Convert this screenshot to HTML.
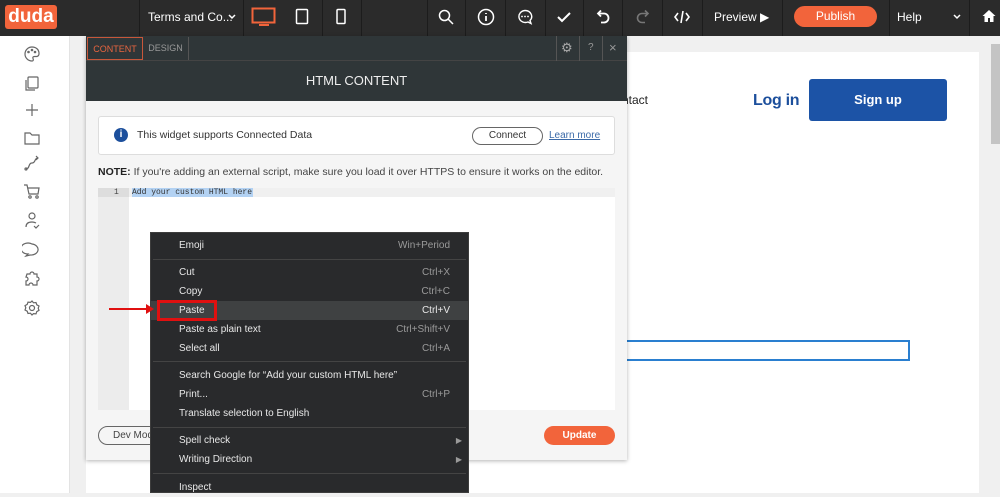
<!DOCTYPE html>
<html><head><style>
*{margin:0;padding:0;box-sizing:border-box}
body{width:1000px;height:493px;overflow:hidden;background:#f0f0f0;font-family:"Liberation Sans",sans-serif;position:relative}
.a{position:absolute}
.top{left:0;top:0;width:1000px;height:36px;background:#2b2b2b}
.dv{position:absolute;top:0;width:1px;height:36px;background:#1c1c1c}
.tw{color:#fff;font-size:13px}
.side{left:0;top:36px;width:70px;height:457px;background:#fff;border-right:1px solid #e3e3e3}
.menu{left:150px;top:232px;width:319px;height:261px;background:#292a2c;border:1px solid #3d3d3d;color:#e8e8e8;font-size:10px}
.mi{position:absolute;left:28px;right:18px;height:19px;line-height:19px}
.mi span{float:right;color:#9a9a9a}
.sep{position:absolute;left:2px;right:2px;height:1px;background:#444}
</style></head><body>
<div class="a top">
 <div class="a" style="left:5px;top:5px;width:52px;height:24px;background:#f2643b;border-radius:3px;color:#fff;font-size:19px;font-weight:bold;text-align:center;line-height:24px">duda</div>
 <div class="dv" style="left:139px"></div><div class="dv" style="left:243px"></div><div class="dv" style="left:322px"></div><div class="dv" style="left:361px"></div><div class="dv" style="left:427px"></div><div class="dv" style="left:465px"></div><div class="dv" style="left:505px"></div><div class="dv" style="left:545px"></div><div class="dv" style="left:583px"></div><div class="dv" style="left:622px"></div><div class="dv" style="left:662px"></div><div class="dv" style="left:702px"></div><div class="dv" style="left:782px"></div><div class="dv" style="left:889px"></div><div class="dv" style="left:969px"></div>
 <div class="a tw" style="left:148px;top:10px;font-size:12px">Terms and Co...</div>
 <svg class="a" style="left:228px;top:14px" width="8" height="6"><path d="M1 1l3 3 3-3" fill="none" stroke="#fff" stroke-width="1.5"/></svg>
 <svg class="a" style="left:251px;top:7px" width="26" height="20"><rect x="1.5" y="1.5" width="22" height="14" fill="none" stroke="#f2643b" stroke-width="2"/><rect x="8" y="17" width="10" height="2" fill="#f2643b"/></svg>
 <svg class="a" style="left:295px;top:8px" width="14" height="18"><rect x="1.5" y="1.5" width="11" height="14" rx="1" fill="none" stroke="#fff" stroke-width="1.5"/></svg>
 <svg class="a" style="left:336px;top:8px" width="10" height="18"><rect x="1" y="1.5" width="8" height="14" rx="1" fill="none" stroke="#fff" stroke-width="1.5"/></svg>
 <svg class="a" style="left:438px;top:9px" width="16" height="16"><circle cx="6.5" cy="6.5" r="5" fill="none" stroke="#fff" stroke-width="1.5"/><path d="M10 10l5 5" stroke="#fff" stroke-width="1.5"/></svg>
 <svg class="a" style="left:477px;top:8px" width="18" height="18"><circle cx="9" cy="9" r="7.5" fill="none" stroke="#fff" stroke-width="1.5"/><path d="M9 8v5M9 5v1" stroke="#fff" stroke-width="1.8"/></svg>
 <svg class="a" style="left:517px;top:9px" width="16" height="16"><path d="M8 1.5a6.5 6 0 1 0 3 11.5l3 1.5-1-3A6.5 6 0 0 0 8 1.5z" fill="none" stroke="#fff" stroke-width="1.4"/><circle cx="5" cy="7.5" r=".9" fill="#fff"/><circle cx="8" cy="7.5" r=".9" fill="#fff"/><circle cx="11" cy="7.5" r=".9" fill="#fff"/></svg>
 <svg class="a" style="left:557px;top:10px" width="14" height="14"><path d="M1 7l4 4 8-8" fill="none" stroke="#fff" stroke-width="2"/></svg>
 <svg class="a" style="left:595px;top:9px" width="16" height="16"><path d="M4 4.5h5a4.5 4.5 0 0 1 0 9H6" fill="none" stroke="#fff" stroke-width="1.8"/><path d="M6 1.5L3 4.5l3 3" fill="none" stroke="#fff" stroke-width="1.8"/></svg>
 <svg class="a" style="left:635px;top:9px" width="16" height="16"><path d="M12 4.5H7a4.5 4.5 0 0 0 0 9h3" fill="none" stroke="#777" stroke-width="1.6"/><path d="M10 1.5l3 3-3 3" fill="none" stroke="#777" stroke-width="1.6"/></svg>
 <svg class="a" style="left:674px;top:10px" width="16" height="14"><path d="M4 3L1 7l3 4M12 3l3 4-3 4M9 1L7 13" fill="none" stroke="#fff" stroke-width="1.6"/></svg>
 <div class="a tw" style="left:714px;top:10px;font-size:12px">Preview &#9654;</div>
 <div class="a" style="left:794px;top:6px;width:83px;height:21px;background:#f2643b;border-radius:11px;color:#fff;font-size:12px;text-align:center;line-height:21px">Publish</div>
 <div class="a tw" style="left:897px;top:10px;font-size:12px">Help</div>
 <svg class="a" style="left:953px;top:14px" width="8" height="6"><path d="M1 1l3 3 3-3" fill="none" stroke="#fff" stroke-width="1.5"/></svg>
 <svg class="a" style="left:982px;top:9px" width="14" height="14"><path d="M7 1L0.5 7H2.5v6h3.5v-4h2v4h3.5V7h2z" fill="#fff"/></svg>
</div>
<div class="a side"></div>
<svg class="a" style="left:22px;top:44px" width="20" height="280" fill="none" stroke="#666" stroke-width="1.2">
 <path d="M10 3a7 7 0 1 0 0 14c1.5 0 1.5-1.5 1-2.5s0-2 1.5-2H15a3 3 0 0 0 2-3C17 5.5 14 3 10 3z"/><circle cx="6.5" cy="8" r=".7"/><circle cx="10" cy="6" r=".7"/><circle cx="13" cy="8" r=".7"/>
 <rect x="6" y="33" width="10" height="11" rx="1"/><path d="M4 36v10h9"/>
 <path d="M10 60v12M4 66h12"/>
 <path d="M3 89h5l2 2h7v9H3z"/>
 <path d="M4 125c4 0 2-6 6-6s2-5 6-5"/><circle cx="4" cy="125" r="1"/><path d="M14 112l2 2-2 2"/>
 <path d="M2 141h3l2 9h9l1-6H6"/><circle cx="8" cy="153" r="1.2"/><circle cx="15" cy="153" r="1.2"/>
 <circle cx="10" cy="172" r="3"/><path d="M4 183c0-4 3-5 6-5 2 0 3 .5 4 1M12 182l2 2 3-3"/>
 <path d="M10 200a7 5.5 0 1 0-4 10l-2 2 4-1a7 5.5 0 1 0 2-11z"/>
 <path d="M5 230h3a2 2 0 1 1 4 0h3v3a2 2 0 1 1 0 4v4h-4a2 2 0 1 0-4 0H4v-4a2 2 0 1 0 0-4z"/>
 <circle cx="10" cy="264" r="2.5"/><path d="M10 257l1.5 1.8 2.5-.3.8 2.3 2.2 1.2-.8 2.2.8 2.2-2.2 1.2-.8 2.3-2.5-.3L10 271l-1.5-1.8-2.5.3-.8-2.3-2.2-1.2.8-2.2-.8-2.2 2.2-1.2.8-2.3 2.5.3z"/>
</svg>
<div class="a" style="left:86px;top:52px;width:893px;height:441px;background:#fff"></div>
<div class="a" style="left:991px;top:44px;width:9px;height:100px;background:#c4c4c4"></div>
<div class="a" style="left:622px;top:93px;font-size:12px;color:#222">ntact</div>
<div class="a" style="left:753px;top:92px;font-size:16px;color:#1c4f9c;font-weight:bold;letter-spacing:-0.3px">Log in</div>
<div class="a" style="left:809px;top:79px;width:138px;height:42px;background:#1c53a6;border-radius:3px;color:#fff;font-size:13px;font-weight:bold;text-align:center;line-height:42px">Sign up</div>
<div class="a" style="left:620px;top:340px;width:290px;height:21px;border:2px solid #2a7fd0"></div>
<!-- panel -->
<div class="a" style="left:86px;top:36px;width:541px;height:424px;background:#f5f5f5;box-shadow:0 1px 4px rgba(0,0,0,.3)">
 <div class="a" style="left:0;top:0;width:541px;height:25px;background:#2f3638;border-bottom:1px solid #444"></div>
 <div class="a" style="left:1px;top:1px;width:56px;height:23px;border:1px solid #c8573a;color:#e8653f;font-size:9px;text-align:center;line-height:22px">CONTENT</div>
 <div class="a" style="left:57px;top:1px;width:46px;height:23px;border-right:1px solid #555;color:#999;font-size:9px;text-align:center;line-height:22px">DESIGN</div>
 <div class="a" style="left:470px;top:0;width:1px;height:25px;background:#555"></div>
 <div class="a" style="left:493px;top:0;width:1px;height:25px;background:#555"></div>
 <div class="a" style="left:516px;top:0;width:1px;height:25px;background:#555"></div>
 <div class="a" style="left:475px;top:4px;color:#aaa;font-size:13px">&#9881;</div>
 <div class="a" style="left:502px;top:6px;color:#999;font-size:10px">?</div>
 <div class="a" style="left:523px;top:4px;color:#999;font-size:13px">&#215;</div>
 <div class="a" style="left:0;top:25px;width:541px;height:40px;background:#2f3638;color:#eee;font-size:13px;text-align:center;line-height:40px">HTML CONTENT</div>
 <div class="a" style="left:12px;top:80px;width:517px;height:39px;background:#fff;border:1px solid #ddd;border-radius:3px"></div>
 <div class="a" style="left:28px;top:92px;width:14px;height:14px;border-radius:50%;background:#1c4f9c;color:#fff;font-size:10px;font-weight:bold;text-align:center;line-height:14px">i</div>
 <div class="a" style="left:51px;top:93px;font-size:10.5px;color:#333">This widget supports Connected Data</div>
 <div class="a" style="left:386px;top:91px;width:71px;height:18px;border:1px solid #666;border-radius:9px;font-size:10px;color:#333;text-align:center;line-height:16px">Connect</div>
 <div class="a" style="left:463px;top:94px;font-size:10px;color:#3b6aa8;text-decoration:underline">Learn more</div>
 <div class="a" style="left:12px;top:130px;font-size:10.5px;color:#444;white-space:nowrap"><b style="color:#222">NOTE:</b> If you're adding an external script, make sure you load it over HTTPS to ensure it works on the editor.</div>
 <div class="a" style="left:12px;top:152px;width:517px;height:222px;background:#fff"></div>
 <div class="a" style="left:12px;top:152px;width:31px;height:222px;background:#ececec"></div>
 <div class="a" style="left:12px;top:152px;width:517px;height:9px;background:#f0f0f0"></div>
 <div class="a" style="left:12px;top:152px;width:31px;height:9px;background:#ddd"></div>
 <div class="a" style="left:28px;top:152px;font-size:8px;color:#444;font-family:'Liberation Mono',monospace">1</div>
 <div class="a" style="left:46px;top:152px;height:9px;background:#b3d2f3;font-size:8px;color:#333;font-family:'Liberation Mono',monospace;line-height:9px;padding-right:1px">Add your custom HTML here</div>
 <div class="a" style="left:12px;top:390px;width:70px;height:19px;border:1px solid #666;border-radius:10px;font-size:10px;color:#444;padding-left:14px;line-height:17px">Dev Mode</div>
 <div class="a" style="left:458px;top:390px;width:71px;height:19px;background:#f2643b;border-radius:10px;color:#fff;font-size:10px;font-weight:bold;text-align:center;line-height:19px">Update</div>
</div>
<!-- context menu -->
<div class="a menu">
 <div class="mi" style="top:3px">Emoji<span>Win+Period</span></div>
 <div class="sep" style="top:26px"></div>
 <div class="mi" style="top:30px">Cut<span>Ctrl+X</span></div>
 <div class="mi" style="top:49px">Copy<span>Ctrl+C</span></div>
 <div class="a" style="left:0;right:0;top:68px;height:19px;background:#3f4142"></div>
 <div class="mi" style="top:68px">Paste<span style="color:#e8e8e8">Ctrl+V</span></div>
 <div class="mi" style="top:87px">Paste as plain text<span>Ctrl+Shift+V</span></div>
 <div class="mi" style="top:106px">Select all<span>Ctrl+A</span></div>
 <div class="sep" style="top:128px"></div>
 <div class="mi" style="top:133px">Search Google for “Add your custom HTML here”</div>
 <div class="mi" style="top:152px">Print...<span>Ctrl+P</span></div>
 <div class="mi" style="top:171px">Translate selection to English</div>
 <div class="sep" style="top:194px"></div>
 <div class="mi" style="top:198px;right:6px">Spell check<span style="font-size:8px">&#9654;</span></div>
 <div class="mi" style="top:217px;right:6px">Writing Direction<span style="font-size:8px">&#9654;</span></div>
 <div class="sep" style="top:240px"></div>
 <div class="mi" style="top:245px">Inspect</div>
</div>
<div class="a" style="left:157px;top:300px;width:60px;height:21px;border:3px solid #e01010"></div>
<div class="a" style="left:109px;top:308px;width:40px;height:2px;background:#e01010"></div>
<div class="a" style="left:146px;top:304px;width:0;height:0;border-left:8px solid #e01010;border-top:5px solid transparent;border-bottom:5px solid transparent"></div>
</body></html>
